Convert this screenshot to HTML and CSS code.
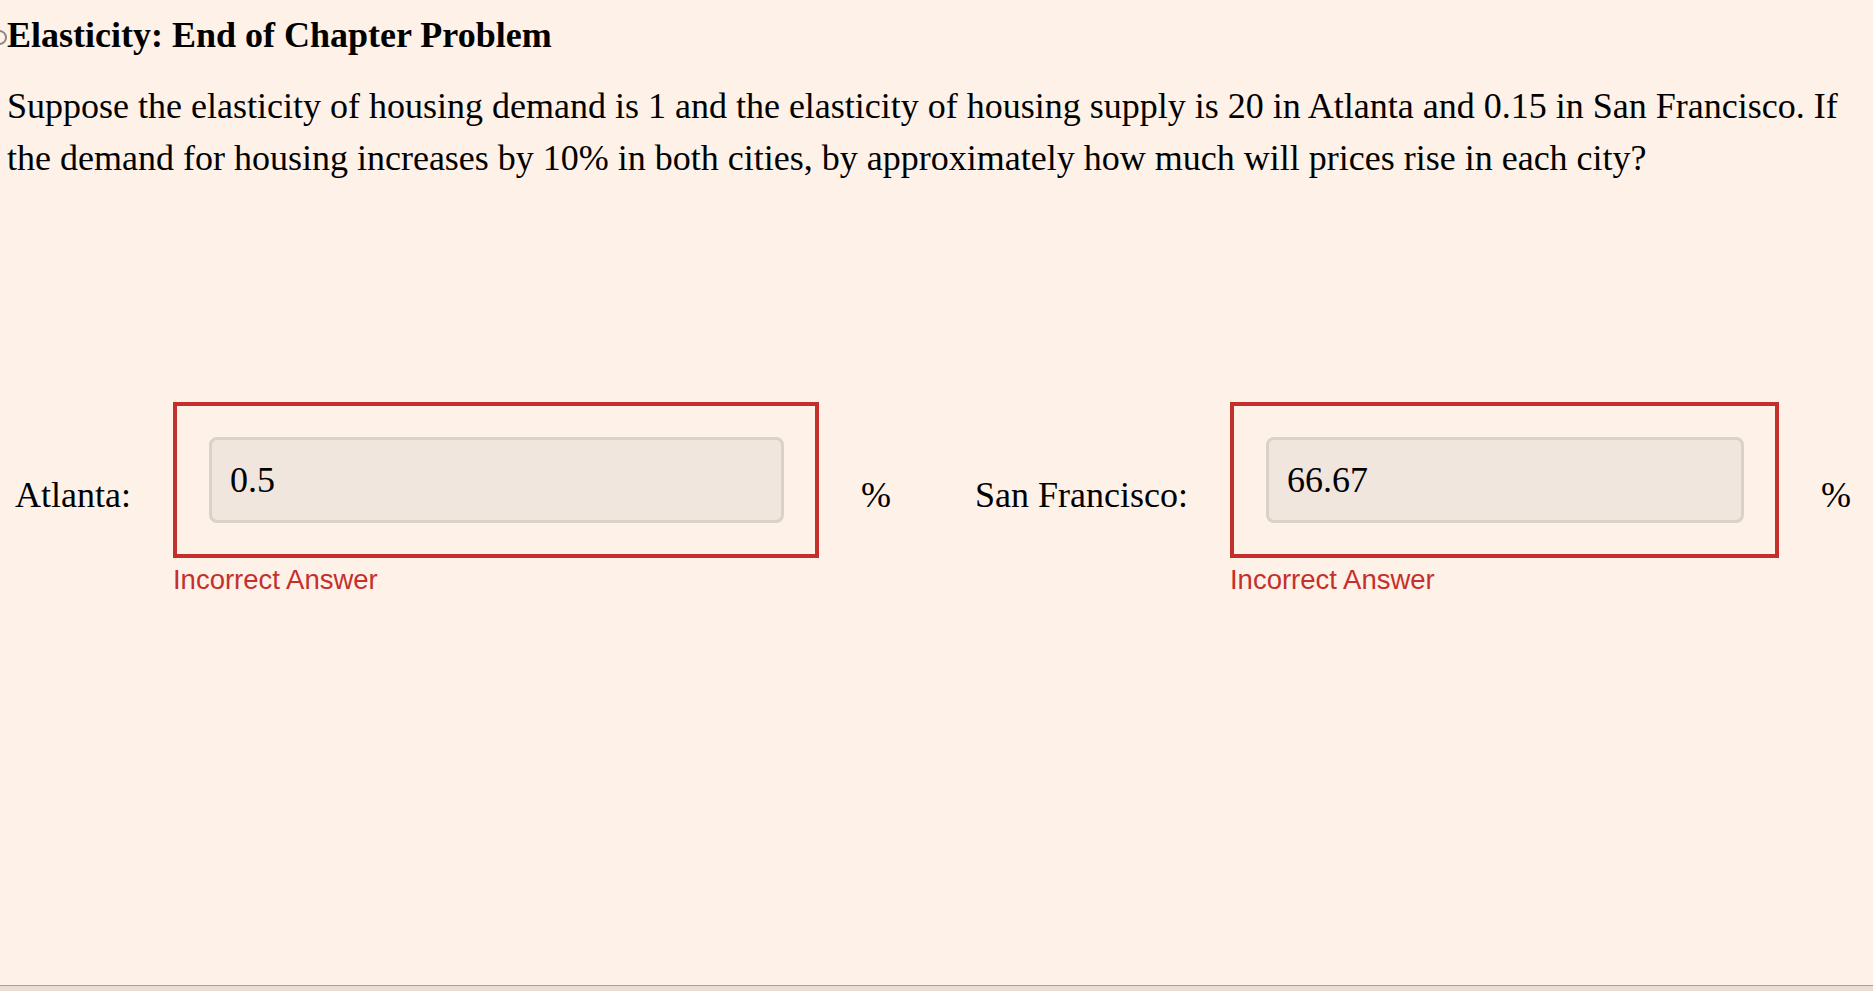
FILE: index.html
```html
<!DOCTYPE html>
<html lang="en">
<head>
<meta charset="utf-8">
<title>Elasticity: End of Chapter Problem</title>
<link rel="stylesheet" href="styles.css">
</head>
<body>
<div class="page">
  <h1 class="title"><span class="marker"></span>Elasticity: End of Chapter Problem</h1>
  <p class="question">Suppose the elasticity of housing demand is 1 and the elasticity of housing supply is 20 in Atlanta and 0.15 in San Francisco. If the demand for housing increases by 10% in both cities, by approximately how much will prices rise in each city?</p>
  <div class="answers">
    <div class="group">
      <label class="label" for="atl">Atlanta:</label>
      <div class="field">
        <div class="frame"><input id="atl" class="entry" type="text" value="0.5" readonly></div>
        <div class="error">Incorrect Answer</div>
      </div>
      <span class="unit">%</span>
    </div>
    <div class="group">
      <label class="label" for="sf">San Francisco:</label>
      <div class="field">
        <div class="frame"><input id="sf" class="entry" type="text" value="66.67" readonly></div>
        <div class="error">Incorrect Answer</div>
      </div>
      <span class="unit">%</span>
    </div>
  </div>
</div>
</body>
</html>
```
FILE: styles.css
```css
html, body {
  margin: 0;
  padding: 0;
}
body {
  background: #e8ded5;
  font-family: "Liberation Serif", "Times New Roman", serif;
  color: #000;
}
.page {
  height: 985px;
  background: #fdf1e8;
  border-bottom: 1px solid #aaa096;
  box-shadow: 0 2px 3px rgba(80, 60, 40, 0.25);
  overflow: hidden;
}
.title {
  margin: 0;
  padding: 14px 0 0 7px;
  font-size: 36px;
  font-weight: 700;
  line-height: 42px;
}
.marker {
  display: inline-block;
  width: 11px;
  height: 11px;
  border: 2px solid #8a8580;
  border-radius: 50%;
  margin-left: -15px;
  margin-right: 0;
  vertical-align: 2px;
}
.question {
  margin: 24px 0 0 0;
  padding: 0 0 0 7px;
  font-size: 36px;
  line-height: 52px;
}
.answers {
  display: flex;
  gap: 84px;
  margin-top: 218px;
  padding: 0 22px 0 15px;
}
.group {
  flex: 1;
  display: flex;
  gap: 42px;
  align-items: flex-start;
}
.label, .unit {
  font-size: 36px;
  line-height: 42px;
  margin-top: 72px;
  white-space: nowrap;
}
.field {
  flex: 1;
  min-width: 0;
  display: flex;
  flex-direction: column;
}
.frame {
  border: 4px solid #c52f2b;
  padding: 31px 31px 31px 32px;
}
.entry {
  display: block;
  box-sizing: border-box;
  width: 100%;
  height: 86px;
  margin: 0;
  padding: 0 18px;
  border: 3px solid #dbd1c7;
  border-radius: 8px;
  background: #f0e6dd;
  font-family: "Liberation Serif", "Times New Roman", serif;
  font-size: 36px;
  color: #000;
  outline: none;
}
.error {
  margin-top: 6px;
  font-family: "Liberation Sans", Arial, sans-serif;
  font-size: 27.5px;
  color: #c5302c;
}
```
